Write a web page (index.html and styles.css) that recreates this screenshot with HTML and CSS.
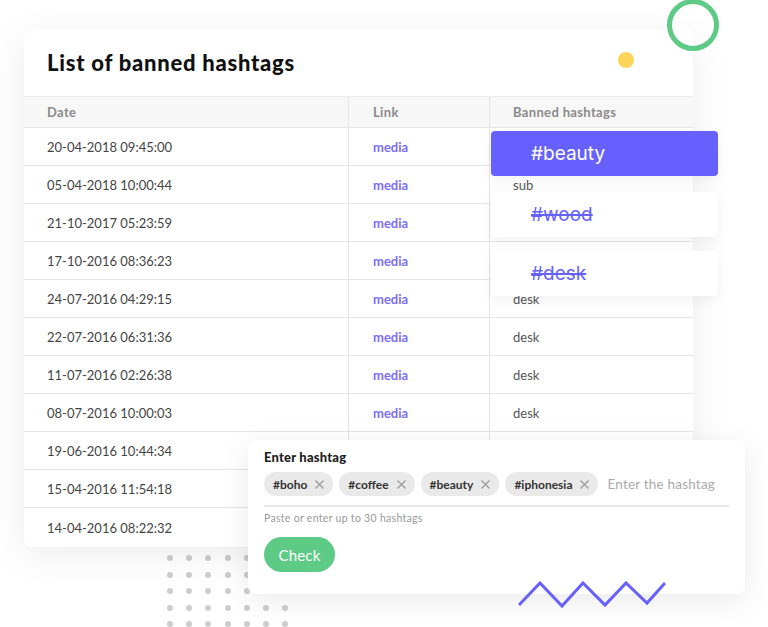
FILE: index.html
```html
<!DOCTYPE html>
<html>
<head>
<meta charset="utf-8">
<link rel="stylesheet" href="styles.css">
</head>
<body>
<div class="stage">
  <div class="dots">
    <span></span><span></span><span></span><span></span><span></span><span></span><span></span>
    <span></span><span></span><span></span><span></span><span></span><span></span><span></span>
    <span></span><span></span><span></span><span></span><span></span><span></span><span></span>
    <span></span><span></span><span></span><span></span><span></span><span></span><span></span>
    <span></span><span></span><span></span><span></span><span></span><span></span><span></span>
  </div>

  <section class="card">
    <h1 class="title">List of banned hashtags</h1>
    <span class="yellow-dot"></span>
    <div class="table">
      <div class="row head"><div class="c c1">Date</div><div class="c c2">Link</div><div class="c c3">Banned hashtags</div></div>
      <div class="row"><div class="c c1">20-04-2018 09:45:00</div><div class="c c2 link">media</div><div class="c c3"></div></div>
      <div class="row"><div class="c c1">05-04-2018 10:00:44</div><div class="c c2 link">media</div><div class="c c3">sub</div></div>
      <div class="row"><div class="c c1">21-10-2017 05:23:59</div><div class="c c2 link">media</div><div class="c c3"></div></div>
      <div class="row"><div class="c c1">17-10-2016 08:36:23</div><div class="c c2 link">media</div><div class="c c3"></div></div>
      <div class="row"><div class="c c1">24-07-2016 04:29:15</div><div class="c c2 link">media</div><div class="c c3">desk</div></div>
      <div class="row"><div class="c c1">22-07-2016 06:31:36</div><div class="c c2 link">media</div><div class="c c3">desk</div></div>
      <div class="row"><div class="c c1">11-07-2016 02:26:38</div><div class="c c2 link">media</div><div class="c c3">desk</div></div>
      <div class="row"><div class="c c1">08-07-2016 10:00:03</div><div class="c c2 link">media</div><div class="c c3">desk</div></div>
      <div class="row"><div class="c c1">19-06-2016 10:44:34</div><div class="c c2"></div><div class="c c3"></div></div>
      <div class="row"><div class="c c1">15-04-2016 11:54:18</div><div class="c c2"></div><div class="c c3"></div></div>
      <div class="row last"><div class="c c1">14-04-2016 08:22:32</div><div class="c c2"></div><div class="c c3"></div></div>
    </div>
  </section>

  <div class="ring"></div>

  <div class="tag tag-active">#beauty</div>
  <div class="tag tag-wood"><s>#wood</s></div>
  <div class="tag tag-desk"><s>#desk</s></div>

  <div class="entry">
    <div class="entry-label">Enter hashtag</div>
    <div class="chips">
      <span class="chip">#boho<svg class="x" width="9" height="9" viewBox="0 0 9 9"><path d="M0.5 0.5L8.5 8.5M8.5 0.5L0.5 8.5" stroke="#9a9a9a" stroke-width="1.2"/></svg></span>
      <span class="chip">#coffee<svg class="x" width="9" height="9" viewBox="0 0 9 9"><path d="M0.5 0.5L8.5 8.5M8.5 0.5L0.5 8.5" stroke="#9a9a9a" stroke-width="1.2"/></svg></span>
      <span class="chip">#beauty<svg class="x" width="9" height="9" viewBox="0 0 9 9"><path d="M0.5 0.5L8.5 8.5M8.5 0.5L0.5 8.5" stroke="#9a9a9a" stroke-width="1.2"/></svg></span>
      <span class="chip">#iphonesia<svg class="x" width="9" height="9" viewBox="0 0 9 9"><path d="M0.5 0.5L8.5 8.5M8.5 0.5L0.5 8.5" stroke="#9a9a9a" stroke-width="1.2"/></svg></span>
      <span class="placeholder">Enter the hashtag</span>
    </div>
    <div class="hint">Paste or enter up to 30 hashtags</div>
    <button class="check">Check</button>
  </div>

  <svg class="zigzag" width="160" height="32" viewBox="0 0 160 32">
    <polyline points="2,24 23,2 45,25 66,2 88,24 109,2 130,22 148,2" fill="none" stroke="#6761fb" stroke-width="3" stroke-linejoin="miter"/>
  </svg>
</div>
</body>
</html>
```
FILE: styles.css
```css
* { box-sizing: border-box; }
html, body { margin: 0; padding: 0; background: #fff; }
body { font-family: "Lato", "Noto Sans", sans-serif; color: #444; }

.stage {
  position: relative;
  width: 768px;
  height: 627px;
  overflow: hidden;
  padding: 29px 0 0 24px;
}

.card {
  position: relative;
  width: 669px;
  background: #fff;
  border-radius: 8px;
  box-shadow: 0 8px 36px rgba(0,0,0,0.08);
  overflow: hidden;
}
.title {
  margin: 0;
  height: 67px;
  padding: 20px 0 0 23px;
  font-size: 22px;
  font-weight: 900;
  color: #111;
  letter-spacing: 0.75px;
}
.yellow-dot {
  position: absolute;
  left: 594px;
  top: 23px;
  width: 16px;
  height: 16px;
  border-radius: 50%;
  background: #fdd55a;
}

.table { border-top: 1px solid #ececec; }
.row {
  display: grid;
  grid-template-columns: 325px 141px 203px;
  height: 38px;
  border-bottom: 1px solid #e6e6e6;
}
.row.last { border-bottom: none; height: 39px; }
.row.head { height: 31px; background: #f7f7f7; }
.c {
  display: flex;
  align-items: center;
  font-size: 13px;
  color: #444;
}
.c1 { padding-left: 23px; border-right: 1px solid #e4e4e4; }
.c2 { padding-left: 24px; border-right: 1px solid #e4e4e4; }
.c3 { padding-left: 23px; color: #555; }
.head .c { color: #8a8a8a; font-weight: 700; font-size: 13px; letter-spacing: 0.35px; }
.link { color: #7b6ef6; font-weight: 700; }

.ring {
  position: absolute;
  left: 667px;
  top: -1px;
  width: 52px;
  height: 52px;
  border-radius: 50%;
  border: 5px solid #5dcb86;
}

.tag {
  position: absolute;
  left: 491px;
  width: 227px;
  height: 45px;
  border-radius: 4px;
  padding-left: 40px;
  display: flex;
  align-items: center;
  font-family: "Inter", "Noto Sans", sans-serif;
  font-size: 19px;
  background: #fff;
  color: #6761fb;
  box-shadow: 0 4px 14px rgba(0,0,0,0.06);
}
.tag s { text-decoration-thickness: 2px; }
.tag-active { top: 131px; background: #6660fe; color: #fff; }
.tag-wood { top: 192px; }
.tag-desk { top: 251px; }

.entry {
  position: absolute;
  left: 248px;
  top: 440px;
  width: 497px;
  height: 154px;
  background: #fff;
  border-radius: 8px;
  box-shadow: 0 6px 30px rgba(0,0,0,0.09);
  padding: 10px 16px 0;
}
.entry-label {
  font-size: 13px;
  font-weight: 900;
  color: #222;
  height: 15px;
  line-height: 15px;
  letter-spacing: 0.2px;
}
.chips {
  display: flex;
  align-items: center;
  gap: 6px;
  margin-top: 7px;
  padding-bottom: 9px;
  border-bottom: 2px solid #e6e6e6;
  white-space: nowrap;
}
.chip {
  flex: none;
  display: inline-flex;
  align-items: center;
  gap: 8px;
  height: 24px;
  padding: 0 9px 0 9px;
  border-radius: 12px;
  background: #e9e9e9;
  font-size: 12px;
  font-weight: 700;
  color: #333;
}
.chip .x { flex: none; }
.placeholder { font-size: 13.5px; color: #aaa; margin-left: 3px; letter-spacing: 0.2px; }
.hint { font-size: 10.5px; color: #999; margin-top: 5px; letter-spacing: 0.3px; }
.check {
  margin-top: 13px;
  width: 71px;
  height: 35px;
  border: none;
  border-radius: 18px;
  background: #5dcb86;
  color: #fff;
  font-family: "Lato", "Noto Sans", sans-serif;
  font-size: 15px;
  padding: 0;
  letter-spacing: 0.2px;
}

.dots {
  position: absolute;
  left: 167px;
  top: 555px;
  display: grid;
  grid-template-columns: repeat(7, 6px);
  column-gap: 13.2px;
  row-gap: 10.5px;
}
.dots span {
  width: 6px;
  height: 6px;
  border-radius: 50%;
  background: #cdcdcd;
}

.zigzag {
  position: absolute;
  left: 517px;
  top: 581px;
}
```
